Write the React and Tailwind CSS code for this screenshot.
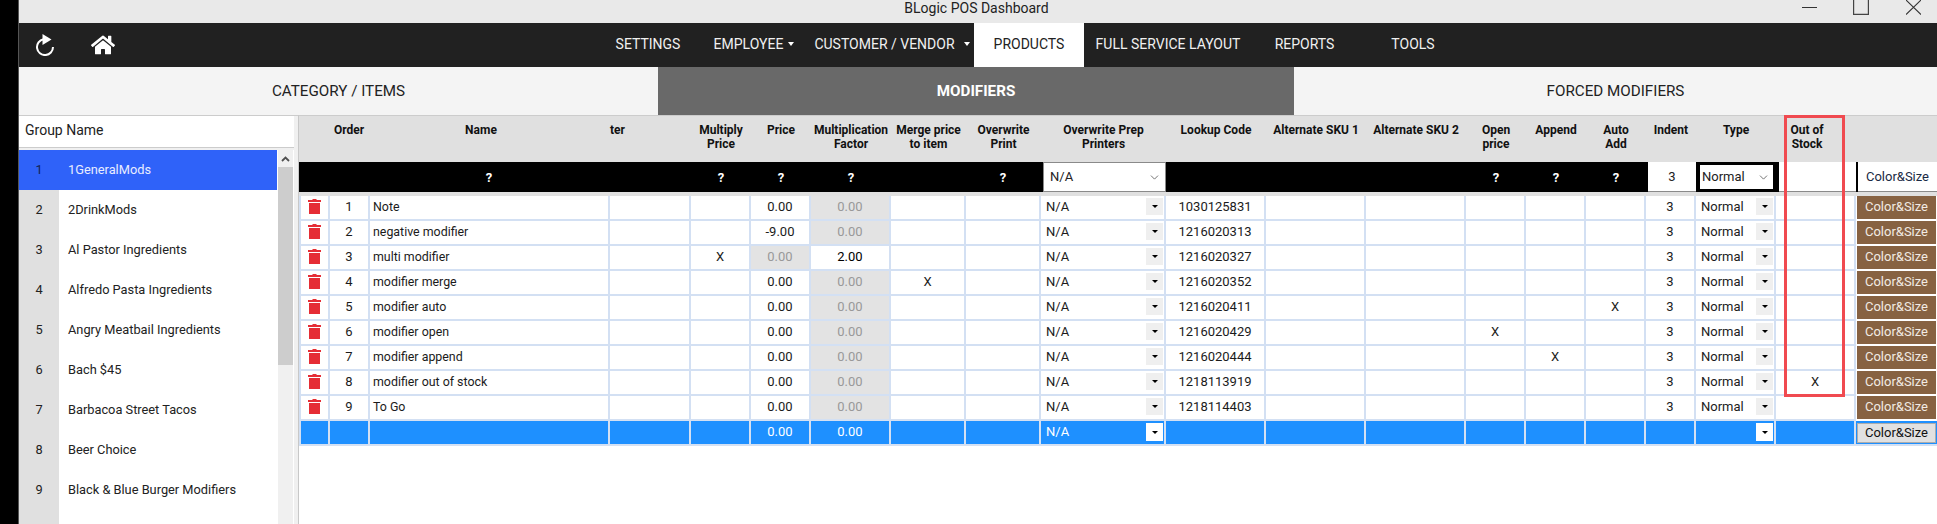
import React from "react";
import { ChevronDown } from "lucide-react";
import { FaHome } from "react-icons/fa";

const navItems = [
  { label: "SETTINGS", w: "w-[100px]" },
  { label: "EMPLOYEE", w: "w-[112px]", caret: true },
  { label: "CUSTOMER / VENDOR", w: "w-[164px]", gap: "gap-[9px]", caret: true },
  { label: "PRODUCTS", w: "w-[110px]", active: true },
  { label: "FULL SERVICE LAYOUT", w: "w-[168px]" },
  { label: "REPORTS", w: "w-[105px]" },
  { label: "TOOLS", w: "w-[112px]" },
];

const groups = [
  "1GeneralMods",
  "2DrinkMods",
  "Al Pastor Ingredients",
  "Alfredo Pasta Ingredients",
  "Angry Meatbail Ingredients",
  "Bach $45",
  "Barbacoa Street Tacos",
  "Beer Choice",
  "Black & Blue Burger Modifiers",
];

const gridCols =
  "grid grid-cols-[31px_40px_240px_81px_60px_60px_80px_75px_75px_125px_100px_100px_100px_60px_60px_60px_50px_80px_80px_81px]";

const headers = [
  "",
  "Order",
  "Name",
  "ter",
  "Multiply Price",
  "Price",
  "Multiplication Factor",
  "Merge price to item",
  "Overwrite Print",
  "Overwrite Prep Printers",
  "Lookup Code",
  "Alternate SKU 1",
  "Alternate SKU 2",
  "Open price",
  "Append",
  "Auto Add",
  "Indent",
  "Type",
  "Out of Stock",
  "",
];

const rows = [
  { name: "Note", price: "0.00", factor: "0.00", code: "1030125831" },
  { name: "negative modifier", price: "-9.00", factor: "0.00", code: "1216020313" },
  { name: "multi modifier", price: "0.00", factor: "2.00", code: "1216020327", multiply: true },
  { name: "modifier merge", price: "0.00", factor: "0.00", code: "1216020352", merge: true },
  { name: "modifier auto", price: "0.00", factor: "0.00", code: "1216020411", auto: true },
  { name: "modifier open", price: "0.00", factor: "0.00", code: "1216020429", open: true },
  { name: "modifier append", price: "0.00", factor: "0.00", code: "1216020444", append: true },
  { name: "modifier out of stock", price: "0.00", factor: "0.00", code: "1218113919", out: true },
  { name: "To Go", price: "0.00", factor: "0.00", code: "1218114403" },
];

function RefreshIcon() {
  return (
    <svg width="20" height="22" viewBox="0 0 20 22" fill="none">
      <path d="M8.5 5.2A8 8 0 1 0 18 13" stroke="white" strokeWidth="2" />
      <path d="M7.5 0L16.5 5.5L7.5 11Z" fill="white" />
    </svg>
  );
}

function TrashIcon() {
  return (
    <svg width="13" height="15" viewBox="0 0 13 15" fill="#e52d35">
      <path d="M4.5 0H8.5V1H13V3H0V1H4.5Z" />
      <path d="M1 4H12V15H1Z" />
    </svg>
  );
}

function WindowControls() {
  return (
    <div className="flex items-start justify-end gap-[36px] pr-[16px]">
      <svg width="15" height="15" viewBox="0 0 15 15" stroke="#333" strokeWidth="1">
        <path d="M0 7.5H15" />
      </svg>
      <svg width="16" height="15" viewBox="0 0 16 15" fill="none" stroke="#444" strokeWidth="1.2" className="mr-[1px]">
        <path d="M0.6 -1V14.4H15.4V-1" />
      </svg>
      <svg width="15" height="15" viewBox="0 0 15 15" stroke="#333" strokeWidth="1.1">
        <path d="M0 0L15 14.5M15 0L0 14.5" />
      </svg>
    </div>
  );
}

function SelectArrow({ light }) {
  return (
    <div className={`ml-auto mr-[1px] flex w-[17px] items-center justify-center ${light ? "h-[18px] bg-white" : "h-[17px] bg-[#efefef]"}`}>
      <div className="h-0 w-0 border-x-[3px] border-t-[3px] border-x-transparent border-t-black" />
    </div>
  );
}

function Cell({ children, className = "" }) {
  return (
    <div className={`flex h-[25px] items-center justify-center overflow-hidden border-r-2 border-b-2 border-[#d3e0f3] text-[13px] text-[#1b1b1b] ${className}`}>
      {children}
    </div>
  );
}

function Row({ row }) {
  const mark = (on) => (on ? "X" : "");
  return (
    <div className={gridCols}>
      <Cell className="border-l-2 pb-[2px]">
        <TrashIcon />
      </Cell>
      <Cell className="pb-[2px]">{row.order}</Cell>
      <Cell className="justify-start pl-[3px] !text-[12.4px]">{row.name}</Cell>
      <Cell />
      <Cell className="pb-[2px]">{mark(row.multiply)}</Cell>
      <Cell className={`pb-[2px] ${row.multiply ? "bg-[#e3e3e3] !text-[#999999]" : ""}`}>{row.price}</Cell>
      <Cell className={`pb-[2px] ${row.multiply ? "!text-black" : "bg-[#e3e3e3] !text-[#999999]"}`}>{row.factor}</Cell>
      <Cell className="pb-[2px]">{mark(row.merge)}</Cell>
      <Cell />
      <Cell className="justify-start pb-[2px] pl-[5px]">
        N/A
        <SelectArrow />
      </Cell>
      <Cell className="pb-[2px]">{row.code}</Cell>
      <Cell />
      <Cell />
      <Cell className="pb-[2px]">{mark(row.open)}</Cell>
      <Cell className="pb-[2px]">{mark(row.append)}</Cell>
      <Cell className="pb-[2px]">{mark(row.auto)}</Cell>
      <Cell className="pb-[2px]">3</Cell>
      <Cell className="justify-start pb-[2px] pl-[5px]">
        Normal
        <SelectArrow />
      </Cell>
      <Cell className="pb-[2px]">{mark(row.out)}</Cell>
      <div className="flex h-[25px] border-b-2 border-white px-[1px]">
        <div className="flex w-full items-center justify-center bg-[#876242] pb-[1px] text-[13px] text-[#f2ebe4]">Color&amp;Size</div>
      </div>
    </div>
  );
}

function BlueCell({ children, className = "" }) {
  return (
    <div className={`flex h-[25px] items-center justify-center border-r-2 border-b-2 border-[#d3e0f3] bg-[#1e90ff] pb-[1px] text-[13px] text-white ${className}`}>
      {children}
    </div>
  );
}

function BlueRow() {
  return (
    <div className={gridCols}>
      <BlueCell className="border-l-2" />
      <BlueCell />
      <BlueCell />
      <BlueCell />
      <BlueCell />
      <BlueCell>0.00</BlueCell>
      <BlueCell>0.00</BlueCell>
      <BlueCell />
      <BlueCell />
      <BlueCell className="justify-start pl-[5px]">
        N/A
        <SelectArrow light />
      </BlueCell>
      <BlueCell />
      <BlueCell />
      <BlueCell />
      <BlueCell />
      <BlueCell />
      <BlueCell />
      <BlueCell />
      <BlueCell className="justify-start">
        <SelectArrow light />
      </BlueCell>
      <BlueCell />
      <div className="flex h-[25px] items-center border-b-2 border-[#d3e0f3] bg-[#1e90ff] px-[1px]">
        <div className="flex h-[20px] w-full items-center justify-center border border-[#adadad] bg-[#e1e1e1] text-[13px] text-[#111]">
          Color&amp;Size
        </div>
      </div>
    </div>
  );
}

function FilterRow() {
  const q = <span className="text-[13px] font-bold text-white">?</span>;
  const blank = <div />;
  return (
    <div className={`${gridCols} h-[30px] items-center bg-black`}>
      {blank}
      {blank}
      <div className="pr-[2px] text-center">{q}</div>
      {blank}
      <div className="text-center">{q}</div>
      <div className="text-center">{q}</div>
      <div className="text-center">{q}</div>
      {blank}
      <div className="pr-[1px] text-center">{q}</div>
      <div className="ml-[2px] flex h-[30px] items-center justify-between border border-[#8a8a8a] bg-white pl-[6px] pr-[4px] text-[13px] text-[#222]">
        N/A
        <ChevronDown size={13} strokeWidth={1.5} color="#555" />
      </div>
      {blank}
      {blank}
      {blank}
      <div className="text-center">{q}</div>
      <div className="text-center">{q}</div>
      <div className="text-center">{q}</div>
      <div className="ml-[2px] flex h-[30px] items-center justify-center border-b border-[#8a8a8a] bg-white text-[13px] text-[#222]">3</div>
      <div className="ml-[1px] flex h-[30px] items-center justify-between border-[3px] border-black bg-white pl-[2px] pr-[3px] text-[13px] text-[#222]">
        Normal
        <ChevronDown size={13} strokeWidth={1.5} color="#555" />
      </div>
      <div className="ml-[3px] h-[30px] border-b border-[#8a8a8a] bg-white" />
      <div className="ml-[2px] flex h-[30px] items-center justify-center border-b border-[#8a8a8a] bg-white text-[13px] text-[#1a2a44]">Color&amp;Size</div>
    </div>
  );
}

function headerClass(h) {
  if (h === "ter") return "text-left";
  if (h === "Order") return "pl-[1px] pr-[3px] text-center";
  if (h === "Name") return "pl-[2px] pr-[20px] text-center";
  if (h === "Out of Stock") return "pl-[2px] pr-[20px] text-center";
  if (h === "Auto Add") return "px-[14px] text-center";
  return "px-[2px] text-center";
}

export default function App() {
  return (
    <div className="flex h-[524px] w-[1937px] overflow-hidden bg-white font-['Roboto',sans-serif]">
      <div className="w-[19px] shrink-0 border-r border-[#555] bg-black" />

      <div className="flex w-[1918px] flex-col">
        {/* title bar */}
        <div className="grid h-[23px] grid-cols-[1fr_auto_1fr] bg-[#e9e9e9]">
          <div />
          <div className="pr-[3px] text-[14px] leading-[16px] text-[#222]">BLogic POS Dashboard</div>
          <WindowControls />
        </div>

        {/* main nav */}
        <div className="flex h-[44px] items-stretch bg-[#212121]">
          <div className="flex w-[579px] items-center pl-[16px]">
            <RefreshIcon />
            <FaHome size={24} color="white" className="ml-[36px]" />
          </div>
          {navItems.map((item) => (
            <div
              key={item.label}
              className={`flex ${item.w} items-center justify-center ${item.gap || "gap-[5px]"} pb-[2px] text-[14px] ${item.active ? "bg-white text-[#222]" : "text-[#f0f0f0]"}`}
            >
              {item.label}
              {item.caret && <div className="h-0 w-0 shrink-0 border-x-[3.5px] border-t-[4px] border-x-transparent border-t-white" />}
            </div>
          ))}
        </div>

        {/* tabs */}
        <div className="flex h-[48px] items-center text-[15.2px]">
          <div className="flex h-full w-[639px] items-center justify-center bg-[#f4f4f4] text-[#222]">CATEGORY / ITEMS</div>
          <div className="flex h-full w-[636px] items-center justify-center bg-[#696969] font-bold text-white">MODIFIERS</div>
          <div className="flex h-full w-[643px] items-center justify-center bg-[#f4f4f4] text-[#222]">FORCED MODIFIERS</div>
        </div>

        <div className="flex h-[409px]">
          {/* group list */}
          <div className="flex w-[279px] shrink-0 flex-col border-t border-[#cccccc] bg-[#f0f0f0]">
            <div className="flex h-[32px] w-[275px] shrink-0 items-center border-b border-[#cccccc] bg-white pb-[2px] pl-[6px] text-[14px] text-[#222]">
              Group Name
            </div>
            <div className="mt-[2px] flex w-[275px] flex-1 bg-white">
              <div className="w-[258px]">
                {groups.map((g, i) => (
                  <div key={g} className={`flex h-[40px] items-center text-[12.8px] ${i === 0 ? "bg-[#2f62f9] text-[#e8edff]" : "text-[#222]"}`}>
                    <div className={`flex h-full w-[40px] items-center justify-center ${i === 0 ? "text-[#14234f]" : "bg-[#e0e0e0]"}`}>{i + 1}</div>
                    <div className="pl-[9px]">{g}</div>
                  </div>
                ))}
                <div className="h-[40px] w-[40px] bg-[#e0e0e0]" />
              </div>
              <div className="ml-[1px] flex w-[15px] flex-col bg-[#f0f0f0]">
                <div className="flex h-[17px] items-center justify-center">
                  <svg width="9" height="6" viewBox="0 0 9 6" fill="none" stroke="#505050" strokeWidth="1.8">
                    <path d="M1 5L4.5 1.5L8 5" />
                  </svg>
                </div>
                <div className="h-[198px] bg-[#cdcdcd]" />
              </div>
            </div>
          </div>

          {/* modifier grid */}
          <div className="relative flex-1 border-l border-[#c8c8c8]">
            <div className={`${gridCols} h-[47px] border-t border-[#cccccc] bg-[#e0e0e0] text-[12px] font-bold leading-[14px] text-[#111]`}>
              {headers.map((h, i) => (
                <div key={i} className={`pt-[7px] ${headerClass(h)}`}>
                  {h}
                </div>
              ))}
            </div>
            <FilterRow />
            <div className="h-[4px] bg-[#e0e0e0]" />
            {rows.map((r, i) => (
              <Row key={r.name} row={{ ...r, order: i + 1 }} />
            ))}
            <BlueRow />
            {/* red highlight drawn over the Out of Stock column */}
            <div className="pointer-events-none absolute top-0 left-[1485px] h-[282px] w-[61px] border-[3px] border-[#f04a50]" />
          </div>
        </div>
      </div>
    </div>
  );
}
